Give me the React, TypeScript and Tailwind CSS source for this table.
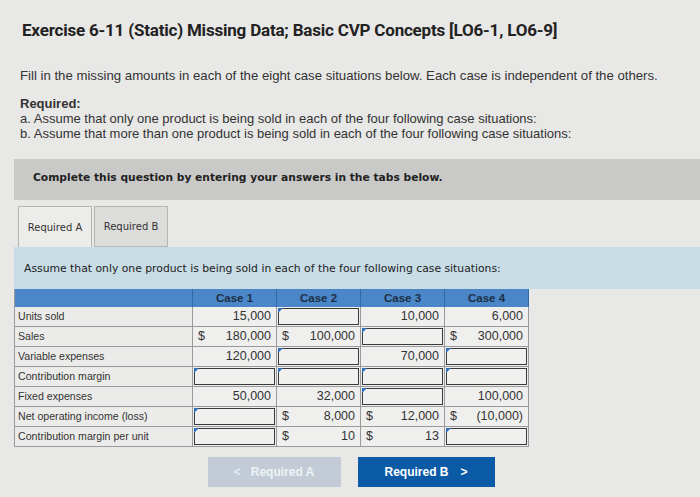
import React from 'react';

type Cell = { dollar?: boolean; value?: string; input?: boolean };

const rows: { label: string; cells: Cell[] }[] = [
  { label: 'Units sold', cells: [{ value: '15,000' }, { input: true }, { value: '10,000' }, { value: '6,000' }] },
  { label: 'Sales', cells: [{ dollar: true, value: '180,000' }, { dollar: true, value: '100,000' }, { input: true }, { dollar: true, value: '300,000' }] },
  { label: 'Variable expenses', cells: [{ value: '120,000' }, { input: true }, { value: '70,000' }, { input: true }] },
  { label: 'Contribution margin', cells: [{ input: true }, { input: true }, { input: true }, { input: true }] },
  { label: 'Fixed expenses', cells: [{ value: '50,000' }, { value: '32,000' }, { input: true }, { value: '100,000' }] },
  { label: 'Net operating income (loss)', cells: [{ input: true }, { dollar: true, value: '8,000' }, { dollar: true, value: '12,000' }, { dollar: true, value: '(10,000)' }] },
  { label: 'Contribution margin per unit', cells: [{ input: true }, { dollar: true, value: '10' }, { dollar: true, value: '13' }, { input: true }] },
];

const DataCell: React.FC<{ cell: Cell }> = ({ cell }) => {
  if (cell.input) {
    return (
      <div className="relative h-[20px] border-r border-b border-[#9a9a9a] bg-[#eeeeec] p-[1px]">
        <div className="h-full w-full border border-[#3a3a3a] bg-[#f0f0ee]" />
        <span className="absolute left-[1px] top-[1px] h-0 w-0 border-t-[5px] border-r-[5px] border-t-[#2f6fc0] border-r-transparent" />
      </div>
    );
  }
  return (
    <div className="flex h-[20px] items-center justify-between border-r border-b border-[#9a9a9a] bg-[#efefed] px-[5px] text-[12.5px] text-[#333]">
      <span>{cell.dollar ? '$' : ''}</span>
      <span>{cell.value}</span>
    </div>
  );
};

const App: React.FC = () => {
  return (
    <div className="h-[497px] w-[700px] overflow-hidden bg-[#e8e8e6] pt-[18px] font-['Liberation_Sans',Arial,sans-serif] text-[#222]">
      <h1 className="pl-[22px] font-['Roboto',sans-serif] text-[17px] font-bold tracking-[-0.2px] text-[#222]">
        Exercise 6-11 (Static) Missing Data; Basic CVP Concepts [LO6-1, LO6-9]
      </h1>

      <p className="mt-[22px] pl-[20px] text-[13.2px] text-[#333]">
        Fill in the missing amounts in each of the eight case situations below. Each case is independent of the others.
      </p>

      <div className="mt-[11px] pl-[20px] text-[13px] leading-[15px] text-[#333]">
        <div className="font-bold">Required:</div>
        <div>a. Assume that only one product is being sold in each of the four following case situations:</div>
        <div>b. Assume that more than one product is being sold in each of the four following case situations:</div>
      </div>

      <div className="ml-[14px] mt-[18px] h-[41px] bg-[#c9c9c7] pl-[19px] pt-[11px] font-['DejaVu_Sans',Verdana,sans-serif] text-[10.7px] font-bold text-[#222]">
        Complete this question by entering your answers in the tabs below.
      </div>

      <div className="ml-[18px] mt-[6px] flex gap-[2px] font-['DejaVu_Sans',Verdana,sans-serif] text-[10px] text-[#333]">
        <div className="flex h-[41px] w-[74px] items-center justify-center border border-b-0 border-[#b5b5b3] bg-[#ececea]">Required A</div>
        <div className="flex h-[41px] w-[74px] items-center justify-center border border-[#b5b5b3] bg-[#dcdcda]">Required B</div>
      </div>

      <div className="ml-[14px] h-[42px] bg-[#c8dce6] pl-[10px] pt-[14px] font-['DejaVu_Sans',Verdana,sans-serif] text-[10.8px] text-[#222]">
        Assume that only one product is being sold in each of the four following case situations:
      </div>

      <div className="ml-[14px] grid w-[514px] grid-cols-[178px_84px_84px_84px_84px] border-l border-[#9a9a9a]">
        <div className="h-[18px] border-r border-[#2f6aa8] bg-[#4a86c8]" />
        {['Case 1', 'Case 2', 'Case 3', 'Case 4'].map((c) => (
          <div key={c} className="flex h-[18px] items-center justify-center border-r border-[#2f6aa8] bg-[#4a86c8] text-[11.5px] font-bold text-[#1d2f45]">
            {c}
          </div>
        ))}
        {rows.map((r) => (
          <React.Fragment key={r.label}>
            <div className="flex h-[20px] items-center border-r border-b border-[#9a9a9a] bg-[#ebebe9] pl-[3px] text-[10.6px] text-[#333]">
              {r.label}
            </div>
            {r.cells.map((cell, i) => (
              <DataCell key={i} cell={cell} />
            ))}
          </React.Fragment>
        ))}
      </div>

      <div className="mt-[10px] flex justify-center gap-[17px] pl-[2px]">
        <button className="flex h-[30px] w-[133px] items-center justify-center gap-[10px] bg-[#c3ccd6] text-[12px] font-bold text-[#eef2f6]">
          <span className="font-normal">&lt;</span>
          <span>Required A</span>
        </button>
        <button className="flex h-[30px] w-[137px] items-center justify-center gap-[12px] bg-[#0b5aa6] text-[12px] font-bold text-white">
          <span>Required B</span>
          <span>&gt;</span>
        </button>
      </div>
    </div>
  );
};

export default App;
